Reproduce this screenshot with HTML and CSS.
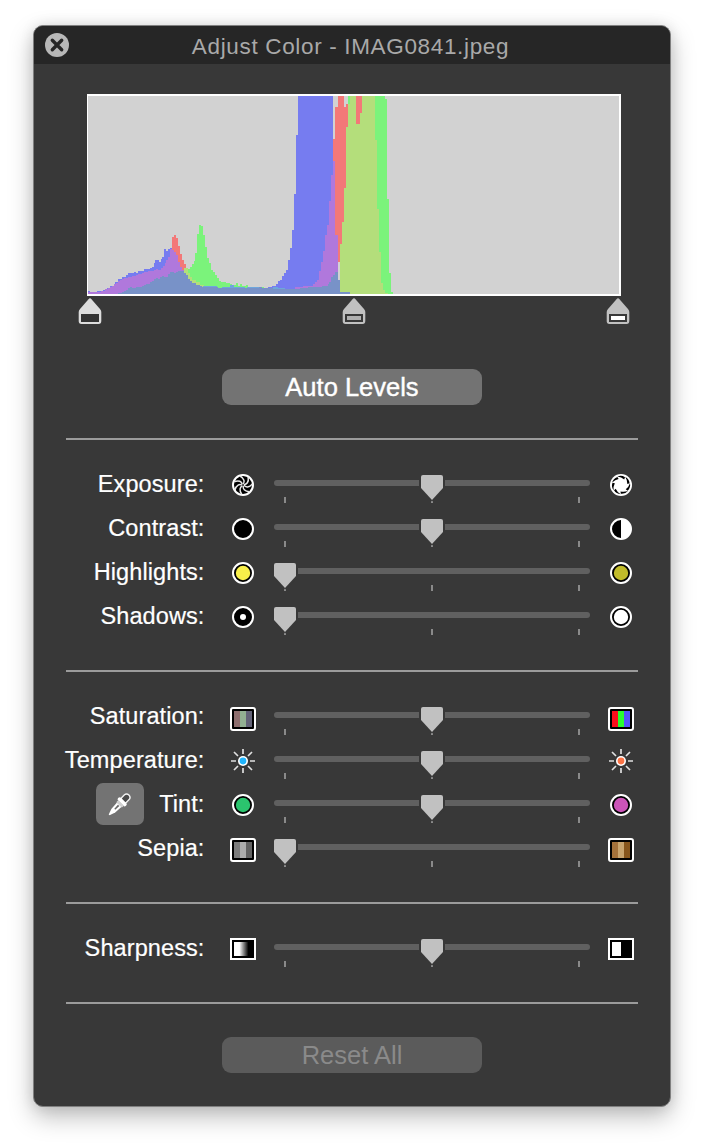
FILE: index.html
```html
<!DOCTYPE html>
<html lang="en">
<head>
  <meta charset="UTF-8" />
  <meta name="viewport" content="width=device-width, initial-scale=1.0" />
  <title>Adjust Color - IMAG0841.jpeg</title>
  <link rel="stylesheet" href="styles.css">
</head>
<body>
  <!-- Shared shapes -->
  <svg class="defs" aria-hidden="true">
    <defs>
      <symbol id="slider-mid" viewBox="0 0 316 44">
        <rect class="track" x="0" y="18" width="316" height="6" rx="3" />
        <path class="tick" d="M10 35h2v6h-2zM157 35h2v6h-2zM304 35h2v6h-2z" />
        <path class="thumb-gap" d="M145 13H171V28L158 39.5L145 28Z" />
        <path class="thumb" d="M149 13H167Q169 13 169 15V26L158 38L147 26V15Q147 13 149 13Z" />
      </symbol>
      <symbol id="slider-min" viewBox="0 0 316 44">
        <rect class="track" x="0" y="18" width="316" height="6" rx="3" />
        <path class="tick" d="M10 35h2v6h-2zM157 35h2v6h-2zM304 35h2v6h-2z" />
        <path class="thumb-gap" d="M0 13H24V28L11 39.5L0 28Z" />
        <path class="thumb" d="M2 13H20Q22 13 22 15V26L11 38L0 26V15Q0 13 2 13Z" />
      </symbol>
      <linearGradient id="soft-edge">
        <stop offset="0.3" stop-color="#fff" />
        <stop offset="0.8" stop-color="#000" />
      </linearGradient>
      <path id="blade" d="M0 -1C2 -3 1.5 -6.500 -3 -9" />
      <path id="sliver" d="M-3.600 -8.400Q0.200 -10.200 4 -7.800L3.200 -5.600Q0.500 -8 -3.600 -8.400Z" />
      <path id="rays" d="M0 -12V-7M0 12V7M-12 0H-7M12 0H7M-9 -9L-5 -5M9 -9L5 -5M-9 9L-5 5M9 9L5 5" />
      <path id="marker" d="M12 0.3Q12.7 0.3 13.5 1.2L22 11Q23.3 12.5 23.3 14V23Q23.3 26 20.5 26H3.5Q0.7 26 0.7 23V14Q0.7 12.5 2 11L10.5 1.2Q11.3 0.3 12 0.3Z" />
    </defs>
  </svg>

  <div class="panel">
    <div class="titlebar">
      <button class="close" aria-label="Close">
        <svg width="24" height="24" viewBox="0 0 24 24"><circle cx="12" cy="12" r="12" fill="#b8b8b8" /><path d="M7.3 7.3L16.7 16.7M16.7 7.3L7.3 16.7" stroke="#262626" stroke-width="3.4" stroke-linecap="round" /></svg>
      </button>
      <h1>Adjust Color - IMAG0841.jpeg</h1>
    </div>

    <div class="content">
      <!-- Histogram -->
      <div class="histogram">
        <svg width="531" height="198" viewBox="88 96 531 198" shape-rendering="crispEdges">
          <path class="h-blue" d="M88 294V291H90V293H93V292H97V291H103V290H107V288H110V286H114V284H115V282H118V279H122V277H126V275H128V273H134V272H136V273H138V271H144V269H150V268H152V267H154V263H155V260H159V262H161V259H162V257H164V249H166V251H168V249H170V248H172V294Z" />
          <path class="h-blue" d="M268 294V287H272V286H276V284H278V281H280V280H282V276H284V273H286V270H288V260H290V248H292V230H294V194H296V135H298V96H333V161H335V235H338V294Z" />
          <path class="h-red" d="M172 294V237H174V235H176V238H178V246H180V254H182V260H184V264H186V271H188V294Z" />
          <path class="h-green" d="M186 294V268H188V269H190V267H192V264H194V261H195V253H197V234H199V225H201V226H203V235H205V247H207V258H209V263H211V270H213V272H215V275H217V278H219V281H221V282H226V283H230V284H232V285H236V283H238V286H240V284H242V286H246V285H248V287H258V288H260V287H264V288H275V290H186Z" />
          <path class="h-red" d="M333 235V139H335V107H338V96H344V107H346V104H348V127H346V222H344V262H338V235Z" />
          <path class="h-green" d="M348 104V96H350V99H375V96H385V99H387V199H389V273H391V292H393V294H350V104Z" />
          <path class="h-mix" d="M350 96H375V140H377V209H379V252H381V283H383V290H385V293H388V294H340V244H342V222H344V188H346V127H348V104H350Z" />
          <path class="h-red" d="M356 96H362V113H360V124H356Z" />
          <path class="h-mix" d="M184 268H188V273H190V277H192V280H196V282H200V285H204V288H186Z" />
          <path class="h-purple" d="M88 294V292H101V291H105V289H108V288H110V287H112V286H114V284H116V283H118V281H120V280H122V279H124V278H128V277H132V276H136V275H138V274H142V273H144V272H148V271H154V270H156V269H158V270H161V268H163V266H165V263H166V260H168V257H170V249H172V250H174V252H176V255H178V262H180V267H182V270H184V294Z" />
          <path class="h-purple" d="M295 294V287H303V286H313V284H315V282H317V280H319V271H321V262H323V251H325V235H327V225H329V201H331V175H333V161H335V235H338V294Z" />
          <path class="h-steel" d="M118 294V293H122V292H124V291H126V290H128V288H130V287H132V288H136V287H142V286H144V285H146V284H150V282H152V281H154V279H156V278H158V279H160V277H162V276H164V277H168V274H170V272H174V273H176V272H178V271H184V273H186V275H188V279H190V281H192V283H196V285H200V286H202V287H204V286H210V287H218V288H228V287H240V288H250V287H262V288H284V289H300V288H308V287H322V286H328V284H329V282H331V277H333V275H335V272H338V280H340V292H350V294Z" />
          <path class="h-teal" d="M203 286H217V287H203ZM222 287H230V285H234V287H245V288H222ZM247 287H259V288H247ZM273 287H278V288H285V289H273Z" />
        </svg>
      </div>
      <div class="markers">
        <svg width="24" height="26" viewBox="0 0 24 26"><use href="#marker" fill="#ddd" /><rect x="3" y="16" width="18" height="8" fill="#333" /></svg>
        <svg width="24" height="26" viewBox="0 0 24 26"><use href="#marker" fill="#c1c1c1" /><rect x="4" y="17" width="16" height="6" fill="#b0b0b0" stroke="#383838" stroke-width="2" /></svg>
        <svg width="24" height="26" viewBox="0 0 24 26"><use href="#marker" fill="#c1c1c1" /><rect x="4" y="17" width="16" height="6" fill="#fff" stroke="#383838" stroke-width="2" /></svg>
      </div>

      <button class="btn">Auto Levels</button>

      <!-- Light -->
      <div class="group">
        <div class="row">
          <div class="label">Exposure:</div>
          <svg class="icon" viewBox="-13 -23 26 44">
            <circle class="ring" r="10" />
            <g fill="none" stroke="#e8e8e8" stroke-width="1.5">
              <use href="#blade" /><use href="#blade" transform="rotate(51.4)" /><use href="#blade" transform="rotate(102.9)" /><use href="#blade" transform="rotate(154.3)" /><use href="#blade" transform="rotate(205.7)" /><use href="#blade" transform="rotate(257.1)" /><use href="#blade" transform="rotate(308.6)" />
            </g>
          </svg>
          <svg class="slider"><use href="#slider-mid" /></svg>
          <svg class="icon" viewBox="-13 -23 26 44">
            <circle r="11" fill="#fff" />
            <use href="#sliver" /><use href="#sliver" transform="rotate(51.4)" /><use href="#sliver" transform="rotate(102.9)" /><use href="#sliver" transform="rotate(154.3)" /><use href="#sliver" transform="rotate(205.7)" /><use href="#sliver" transform="rotate(257.1)" /><use href="#sliver" transform="rotate(308.6)" />
          </svg>
        </div>
        <div class="row">
          <div class="label">Contrast:</div>
          <svg class="icon" viewBox="-13 -23 26 44"><circle class="ring" r="10" /></svg>
          <svg class="slider"><use href="#slider-mid" /></svg>
          <svg class="icon" viewBox="-13 -23 26 44"><circle class="ring" r="10" /><path fill="#fff" d="M0 -10A10 10 0 0 1 0 10Z" /></svg>
        </div>
        <div class="row">
          <div class="label">Highlights:</div>
          <svg class="icon" viewBox="-13 -23 26 44"><circle class="ring" r="10" /><circle r="7.2" fill="#f8ef4a" /></svg>
          <svg class="slider"><use href="#slider-min" /></svg>
          <svg class="icon" viewBox="-13 -23 26 44"><circle class="ring" r="10" /><circle r="7.2" fill="#c1bb2a" /></svg>
        </div>
        <div class="row">
          <div class="label">Shadows:</div>
          <svg class="icon" viewBox="-13 -23 26 44"><circle class="ring" r="10" /><circle r="3" fill="#fff" /></svg>
          <svg class="slider"><use href="#slider-min" /></svg>
          <svg class="icon" viewBox="-13 -23 26 44"><circle class="ring" r="10" /><circle r="7.2" fill="#fff" /></svg>
        </div>
      </div>

      <!-- Color -->
      <div class="group">
        <div class="row">
          <div class="label">Saturation:</div>
          <svg class="icon" viewBox="-13 -25 26 44"><rect class="ring" x="-12" y="-11" width="24" height="22" rx="2" /><path fill="#8e6e6e" d="M-9-8h6V8h-6z" /><path fill="#92b092" d="M-3-8h6V8h-6z" /><path fill="#636378" d="M3-8h6V8h-6z" /></svg>
          <svg class="slider"><use href="#slider-mid" /></svg>
          <svg class="icon" viewBox="-13 -25 26 44"><rect class="ring" x="-12" y="-11" width="24" height="22" rx="2" /><path fill="#fc0d1b" d="M-9-8h6V8h-6z" /><path fill="#29fd2f" d="M-3-8h6V8h-6z" /><path fill="#5252fb" d="M3-8h6V8h-6z" /></svg>
        </div>
        <div class="row">
          <div class="label">Temperature:</div>
          <svg class="icon" viewBox="-13 -23 26 44"><use href="#rays" stroke="#e0e0e0" stroke-width="1.7" /><circle r="5" fill="#fff" /><circle r="3.4" fill="#1fb4fc" /></svg>
          <svg class="slider"><use href="#slider-mid" /></svg>
          <svg class="icon" viewBox="-13 -23 26 44"><use href="#rays" stroke="#e0e0e0" stroke-width="1.7" /><circle r="5" fill="#fff" /><circle r="3.4" fill="#fc7446" /></svg>
        </div>
        <div class="row">
          <div class="label">
            <button class="picker" aria-label="Pick tint">
              <svg width="24" height="24" viewBox="0 0 24 24">
                <g transform="translate(-1 1) rotate(45 12 12)">
                  <path fill="#fff" d="M8.800 11H15.200L14.600 20L12.600 26H11.400L9.400 20Z" />
                  <path fill="#666" d="M11 12.500H13L12.600 18H11.400Z" />
                  <rect x="8.700" y="-2" width="6.600" height="10" rx="3.300" fill="#4a4a4a" stroke="#f2f2f2" stroke-width="1.400" />
                  <rect x="6.500" y="5.500" width="11" height="4" rx="1.800" fill="#fff" />
                  <rect x="8" y="9" width="8" height="3" rx="1" fill="#d0d0d0" />
                </g>
              </svg>
            </button>
            Tint:
          </div>
          <svg class="icon" viewBox="-13 -23 26 44"><circle class="ring" r="10" /><circle r="7.2" fill="#2bc46e" /></svg>
          <svg class="slider"><use href="#slider-mid" /></svg>
          <svg class="icon" viewBox="-13 -23 26 44"><circle class="ring" r="10" /><circle r="7.2" fill="#cb54b8" /></svg>
        </div>
        <div class="row">
          <div class="label">Sepia:</div>
          <svg class="icon" viewBox="-13 -24 26 44"><rect class="ring" x="-12" y="-11" width="24" height="22" rx="2" /><path fill="#7b7b7b" d="M-9-8h6V8h-6z" /><path fill="#adadad" d="M-3-8h6V8h-6z" /><path fill="#636363" d="M3-8h6V8h-6z" /></svg>
          <svg class="slider"><use href="#slider-min" /></svg>
          <svg class="icon" viewBox="-13 -24 26 44"><rect class="ring" x="-12" y="-11" width="24" height="22" rx="2" /><path fill="#a3713a" d="M-9-8h6V8h-6z" /><path fill="#c8a46e" d="M-3-8h6V8h-6z" /><path fill="#87561d" d="M3-8h6V8h-6z" /></svg>
        </div>
      </div>

      <!-- Detail -->
      <div class="group">
        <div class="row">
          <div class="label">Sharpness:</div>
          <svg class="icon" viewBox="-13 -23 26 44"><rect class="ring" x="-12" y="-10" width="24" height="20" /><rect x="-9" y="-7" width="18" height="14" fill="url(#soft-edge)" /></svg>
          <svg class="slider"><use href="#slider-mid" /></svg>
          <svg class="icon" viewBox="-13 -23 26 44"><rect class="ring" x="-12" y="-10" width="24" height="20" /><rect x="-9" y="-7" width="9" height="14" fill="#fff" /></svg>
        </div>
      </div>

      <div class="footer">
        <button class="btn" disabled>Reset All</button>
      </div>
    </div>
  </div>
</body>
</html>
```
FILE: styles.css
```css
* { box-sizing: border-box; }
body { margin: 0; padding: 25px 33px; min-height: 1148px; background: #fff; font-family: "Liberation Sans", Helvetica, Arial, sans-serif; }
svg { display: block; }
button { border: none; padding: 0; font-family: inherit; }
.defs { width: 0; height: 0; position: absolute; }

.panel { width: 638px; height: 1082px; background: #383838; border: 1px solid #808080; border-radius: 10px; overflow: hidden; box-shadow: 0 10px 24px rgba(0,0,0,0.26), 0 0 14px rgba(0,0,0,0.1); }
.titlebar { display: flex; align-items: center; height: 38px; padding: 0 11px; background: #262626; }
.titlebar h1 { flex: 1; margin: 0; padding: 3px 27px 0 0; text-align: center; font-size: 22.5px; font-weight: normal; letter-spacing: 0.66px; color: #a9a9a9; }
.close { background: none; }
.content { padding: 30px 32px 33px; }

.histogram { width: 534px; height: 202px; margin-left: 21px; background: #d2d2d2; border: 2px solid #fff; border-left-width: 1px; }
.h-blue { fill: #767cf0; }
.h-red { fill: #f37878; }
.h-green { fill: #7bf37b; }
.h-purple { fill: #b078dc; }
.h-mix { fill: #b4de7b; }
.h-steel { fill: #7892c8; }
.h-teal { fill: #6ea6dc; }
.markers { display: flex; justify-content: space-between; width: 552px; margin: 2px 0 45px 12px; }

.btn { display: block; width: 260px; height: 36px; margin-left: 156px; border-radius: 9px; background: #737373; color: #fff; font-size: 25.5px; line-height: 37px; -webkit-text-stroke: 0.4px #fff; }
.btn:disabled { background: #5b5b5b; color: #8a8a8a; -webkit-text-stroke: 0; }

.group { padding-bottom: 32px; }
.group::before, .footer::before { content: ""; display: block; height: 2px; background: #9b9b9b; }
.group::before { margin-bottom: 22px; }
.footer::before { margin-bottom: 33px; }
.btn + .group { margin-top: 33px; }

.row { display: grid; grid-template-columns: 146px 26px 316px 26px; column-gap: 18px; height: 44px; }
.label { display: flex; justify-content: flex-end; align-items: center; gap: 15px; height: 44px; padding-right: 7.5px; color: #fff; font-size: 23.5px; letter-spacing: 0.1px; white-space: nowrap; -webkit-text-stroke: 0.2px #fff; }
.slider { width: 316px; height: 44px; }
.icon { width: 26px; height: 44px; }
.picker { display: flex; align-items: center; justify-content: center; width: 48px; height: 42px; border-radius: 7px; background: #737373; }

.track { fill: #606060; }
.tick { fill: #8a8a8a; }
.thumb { fill: #c1c1c1; }
.thumb-gap { fill: #383838; }
.ring { fill: #000; stroke: #fff; stroke-width: 2px; }
```
